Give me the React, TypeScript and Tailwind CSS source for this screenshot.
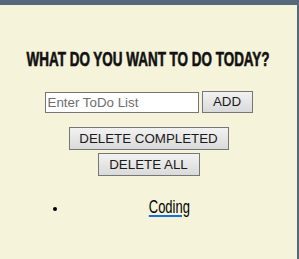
import React from "react";

export default function App() {
  return (
    <div className="min-h-screen bg-[#56687a] pt-[5px] font-['Liberation_Sans',Arial,sans-serif]">
      <div className="w-[297px] h-[254px] bg-[#f5f3da] flex flex-col items-center overflow-hidden">
        <h1 className="mt-[44px] w-full flex justify-center text-[19.5px] leading-[20px] font-bold text-[#111] font-['Liberation_Sans',Arial,sans-serif]">
          <span className="shrink-0 inline-block whitespace-nowrap scale-x-[0.69] origin-center [-webkit-text-stroke:0.6px_#111]">
            WHAT DO YOU WANT TO DO TODAY?
          </span>
        </h1>
        <div className="mt-[22px] flex items-center gap-[3px]">
          <input
            type="text"
            placeholder="Enter ToDo List"
            className="w-[154px] h-[21px] bg-white border border-[#767676] px-[2px] text-[13.33px] text-black placeholder:text-[#6d6d6d] outline-none font-['Liberation_Sans',Arial,sans-serif]"
          />
          <button className="w-[51px] h-[22px] border border-[#767676] bg-gradient-to-b from-[#f2f2f2] to-[#dadada] text-[13.33px] text-[#1a1a1a] font-['Liberation_Sans',Arial,sans-serif]">
            ADD
          </button>
        </div>
        <div className="mt-[14px] flex flex-col items-center gap-[3px]">
          <button className="w-[160px] h-[23px] border border-[#767676] bg-gradient-to-b from-[#f2f2f2] to-[#dadada] text-[13.33px] text-[#1a1a1a] font-['Liberation_Sans',Arial,sans-serif]">
            DELETE COMPLETED
          </button>
          <button className="w-[102px] h-[23px] border border-[#767676] bg-gradient-to-b from-[#f2f2f2] to-[#dadada] text-[13.33px] text-[#1a1a1a] font-['Liberation_Sans',Arial,sans-serif]">
            DELETE ALL
          </button>
        </div>
        <ul className="self-stretch mt-[20px] pl-[68px] pr-[27px] list-disc">
          <li className="text-center text-[18.5px] leading-[22px] text-black font-['Liberation_Sans',Arial,sans-serif] marker:text-[13px]">
            <span className="inline-block scale-x-[0.7] origin-center underline decoration-[#1a6fd8] decoration-[1.5px] underline-offset-[2px]">
              Coding
            </span>
          </li>
        </ul>
      </div>
    </div>
  );
}
